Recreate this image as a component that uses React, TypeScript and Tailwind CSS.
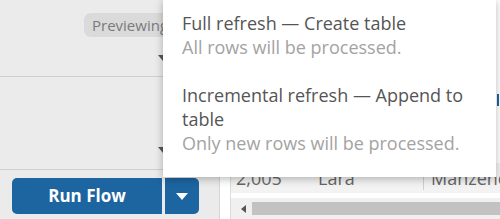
export default function App() {
  return (
    <div className="relative flex h-[219px] w-[500px] overflow-hidden bg-white font-['Open_Sans','Liberation_Sans',sans-serif]">
      {/* left panel */}
      <div className="flex w-[220px] shrink-0 flex-col border-r border-[#d6d6d6] bg-[#ebebeb]">
        <div className="relative h-[77px] border-b border-[#cfcfcf]">
          <div className="ml-[84px] mt-[13px] inline-flex h-[24px] items-center rounded-[7px] bg-[#dadada] px-[8px] text-[15px] text-[#7a7a7a]">
            Previewing
          </div>
          <div className="absolute left-[158px] top-[55px] h-0 w-0 border-x-[5px] border-t-[6px] border-x-transparent border-t-[#555]" />
        </div>
        <div className="relative h-[93px] border-b border-[#cfcfcf]">
          <div className="absolute left-[158px] top-[70px] h-0 w-0 border-x-[5px] border-t-[6px] border-x-transparent border-t-[#555]" />
        </div>
        <div className="flex gap-[3px] pl-[12px] pt-[8px]">
          <button className="flex h-[36px] w-[150px] items-center justify-center rounded-l-[5px] bg-[#1d65a0] text-[17px] font-bold text-white">
            Run Flow
          </button>
          <button className="flex h-[36px] w-[34px] items-center justify-center rounded-r-[5px] bg-[#1d65a0]">
            <span className="h-0 w-0 border-x-[6px] border-t-[7px] border-x-transparent border-t-white" />
          </button>
        </div>
      </div>

      {/* data grid */}
      <div className="ml-[10px] flex min-w-0 flex-1 flex-col border-l border-[#dcdcdc]">
        <div className="flex-1 bg-white">
          <div className="ml-[266px] mt-[94px] h-[12px] w-[2px] bg-[#1d65a0]" />
        </div>
        <div className="flex h-[30px] items-end overflow-hidden whitespace-nowrap bg-[#f3f3f3] pb-[3px] text-[18px] leading-[24px] text-[#666]">
          <span className="w-[82px] shrink-0 pl-[5px]">2,005</span>
          <span className="w-[111px] shrink-0 border-r border-[#cfcfcf] pl-[5px]">Lara</span>
          <span className="pl-[7px]">Manzenero</span>
        </div>
        <div className="mt-[5px] flex h-[21px] items-center gap-[6px] bg-[#f0f0f0] pl-[10px]">
          <span className="h-0 w-0 border-y-[4px] border-r-[5px] border-y-transparent border-r-[#555]" />
          <div className="h-[13px] flex-1 bg-[#c2c2c2]" />
        </div>
      </div>

      {/* dropdown menu */}
      <div className="absolute left-[163px] top-[-1px] w-[333px] bg-white pb-[10px] shadow-[0_2px_8px_rgba(0,0,0,0.28)]">
        <div className="px-[19px] py-[12px] text-[18px] leading-[24px]">
          <div className="text-[#555]">Full refresh — Create table</div>
          <div className="text-[#a3a3a3]">All rows will be processed.</div>
        </div>
        <div className="px-[19px] py-[12px] text-[18px] leading-[24px]">
          <div className="text-[#555]">Incremental refresh — Append to table</div>
          <div className="text-[#a3a3a3]">Only new rows will be processed.</div>
        </div>
      </div>
    </div>
  );
}
